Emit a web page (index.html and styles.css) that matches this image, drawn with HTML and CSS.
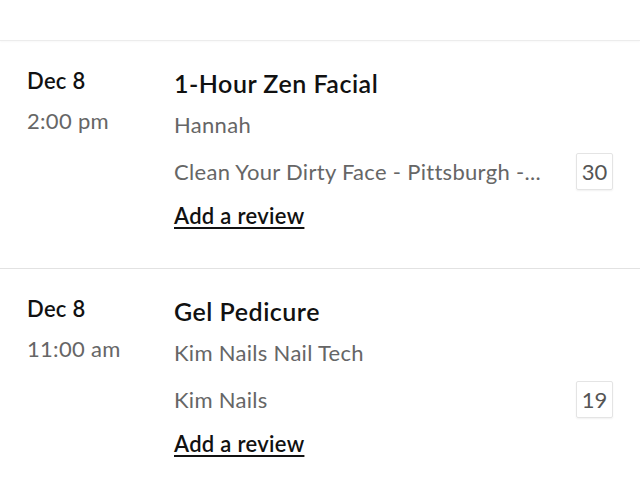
FILE: index.html
```html
<html charset="utf-8">
  <head>
    <title>Past appointments</title>
    <link rel="stylesheet" href="styles.css">
  </head>
  <body>
    <div class="topbar"></div>
    <div class="appt">
      <div class="when">
        <div class="date">Dec 8</div>
        <div class="time">2:00 pm</div>
      </div>
      <div class="what">
        <div class="service">1-Hour Zen Facial</div>
        <div class="staff">Hannah</div>
        <div class="place-row">
          <span class="place">Clean Your Dirty Face - Pittsburgh -...</span>
          <span class="badge">30</span>
        </div>
        <a class="review" href="#">Add a review</a>
      </div>
    </div>
    <div class="appt">
      <div class="when">
        <div class="date">Dec 8</div>
        <div class="time">11:00 am</div>
      </div>
      <div class="what">
        <div class="service">Gel Pedicure</div>
        <div class="staff">Kim Nails Nail Tech</div>
        <div class="place-row">
          <span class="place">Kim Nails</span>
          <span class="badge">19</span>
        </div>
        <a class="review" href="#">Add a review</a>
      </div>
    </div>
  </body>
</html>
```

FILE: styles.css
```css
body {
  margin: 0;
  background: #fff;
  font-family: Lato, "Noto Sans", sans-serif;
  color: #111;
  letter-spacing: 0.3px;
}

.topbar {
  height: 40px;
  border-bottom: 1px solid #ececec;
  box-shadow: 0 1px 2px rgba(0, 0, 0, 0.03);
}

.appt {
  display: flex;
  padding: 26px 27px 38px 27px;
  border-bottom: 1px solid #e2e2e2;
}

.when { width: 147px; flex: none; }
.date { font-size: 22px; line-height: 28px; font-weight: 600; }
.time { font-size: 22px; line-height: 28px; color: #666; margin-top: 12px; }

.what { flex: 1; min-width: 0; display: flex; flex-direction: column; }
.service { font-size: 25px; line-height: 32px; font-weight: 600; letter-spacing: 0.5px; }
.staff { font-size: 22px; line-height: 28px; color: #666; margin-top: 12px; }

.place-row {
  display: flex;
  align-items: center;
  justify-content: space-between;
  margin-top: 13px;
  height: 38px;
}
.place {
  font-size: 22px;
  color: #666;
  white-space: nowrap;
}
.badge {
  flex: none;
  width: 35px;
  height: 35px;
  border: 1px solid #e4e4e4;
  border-radius: 2px;
  box-shadow: 0 1px 2px rgba(0, 0, 0, 0.06);
  display: flex;
  align-items: center;
  justify-content: center;
  font-size: 22px;
  color: #555;
  letter-spacing: 0;
}

.review {
  align-self: flex-start;
  margin-top: 12px;
  font-size: 22px;
  line-height: 28px;
  font-weight: 600;
  color: #111;
  text-decoration: underline;
  text-decoration-thickness: 2px;
  text-underline-offset: 3px;
}
```
